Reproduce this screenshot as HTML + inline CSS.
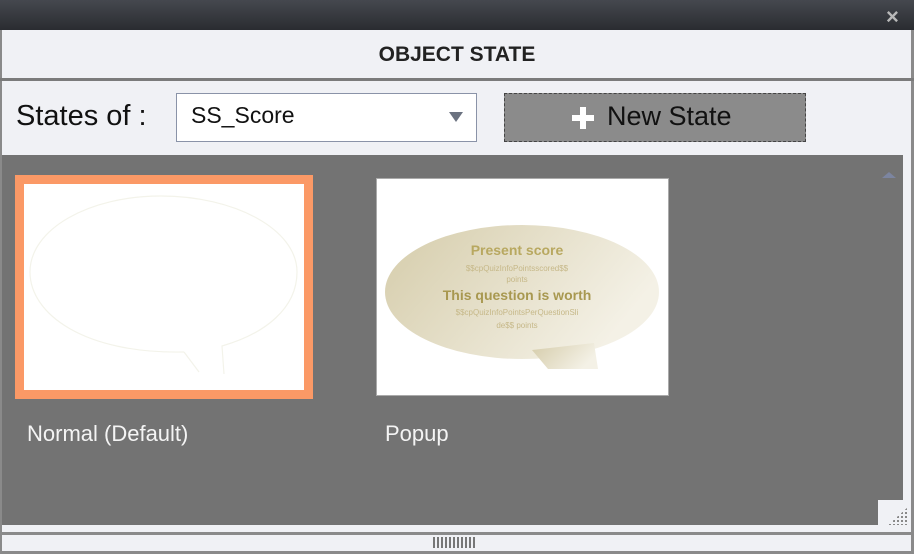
<!DOCTYPE html>
<html><head><style>
*{margin:0;padding:0;box-sizing:border-box}
body{width:914px;height:554px;background:#f0f1f5;position:relative;overflow:hidden;font-family:"Liberation Sans",sans-serif}
.a{position:absolute;white-space:nowrap}
</style></head><body>
<div class="a" style="left:0;top:0;width:914px;height:30px;background:linear-gradient(#45484f,#2a2c31);"></div>
<div class="a" style="left:886px;top:4px;color:#b8b8b8;font-weight:bold;font-size:22px;line-height:26px">×</div>
<div class="a" style="left:0;top:30px;width:2px;height:524px;background:#8a8a8a"></div>
<div class="a" style="left:911px;top:30px;width:3px;height:524px;background:#8a8a8a"></div>
<div class="a" style="left:0;top:42px;width:914px;text-align:center;font-size:21px;line-height:26px;font-weight:bold;color:#222;">OBJECT STATE</div>
<div class="a" style="left:0;top:78px;width:914px;height:3px;background:#7b7b7b"></div>
<div class="a" style="left:16px;top:99px;font-size:29px;line-height:34px;color:#111;">States of :</div>
<div class="a" style="left:176px;top:93px;width:301px;height:49px;background:#fff;border:1px solid #8a93a8"></div>
<div class="a" style="left:191px;top:101px;font-size:23px;line-height:28px;color:#111;">SS_Score</div>
<div class="a" style="left:449px;top:112px;width:0;height:0;border-left:7px solid transparent;border-right:7px solid transparent;border-top:10px solid #6b7280"></div>
<div class="a" style="left:504px;top:93px;width:302px;height:49px;background:#8b8b8b;border:1px dashed #444"></div>
<div class="a" style="left:572px;top:115px;width:22px;height:6px;background:#fff"></div>
<div class="a" style="left:580px;top:107px;width:6px;height:22px;background:#fff"></div>
<div class="a" style="left:607px;top:100px;font-size:27px;line-height:32px;color:#111;">New State</div>
<div class="a" style="left:2px;top:155px;width:901px;height:370px;background:#737373"></div>
<div class="a" style="left:878px;top:500px;width:25px;height:25px;background:#f0f1f5"></div>
<div class="a" style="left:882px;top:172px;width:0;height:0;border-left:7px solid transparent;border-right:7px solid transparent;border-bottom:6px solid #7c85a0"></div>
<div class="a" style="left:15px;top:175px;width:298px;height:224px;border:9px solid #fb9966;background:#fff"></div>
<svg class="a" style="left:24px;top:184px" width="280" height="206"><path d="M160 168 C 60 170 6 130 6 88 C 6 45 65 12 137 12 C 210 12 273 45 273 88 C 273 125 240 150 198 162 L 200 190 M160 168 L 175 188" fill="none" stroke="#f3f3ea" stroke-width="1.2"/></svg>
<div class="a" style="left:27px;top:421px;font-size:22px;line-height:26px;color:#f4f4f4;">Normal (Default)</div>
<div class="a" style="left:376px;top:178px;width:293px;height:218px;background:#fff;border:1px solid #aaa"></div>
<svg class="a" style="left:376px;top:178px" width="293" height="218">
<defs><linearGradient id="g" x1="0" y1="0" x2="1" y2="0.4"><stop offset="0" stop-color="#d5ccaa"/><stop offset="1" stop-color="#f4f1e6"/></linearGradient></defs>
<ellipse cx="146" cy="114" rx="137" ry="67" fill="url(#g)"/>
<path d="M156 172 L172 191 L222 191 L218 165 Z" fill="url(#g)"/>
<text x="141" y="77" font-size="14" font-weight="bold" fill="#b8a860" text-anchor="middle" font-family="Liberation Sans">Present score</text>
<text x="141" y="93" font-size="8" fill="#c6b888" text-anchor="middle" font-family="Liberation Sans">$$cpQuizInfoPointsscored$$</text>
<text x="141" y="104" font-size="8" fill="#c6b888" text-anchor="middle" font-family="Liberation Sans">points</text>
<text x="141" y="122" font-size="14" font-weight="bold" fill="#a89850" text-anchor="middle" font-family="Liberation Sans">This question is worth</text>
<text x="141" y="137" font-size="8" fill="#c6b888" text-anchor="middle" font-family="Liberation Sans">$$cpQuizInfoPointsPerQuestionSli</text>
<text x="141" y="150" font-size="8" fill="#c6b888" text-anchor="middle" font-family="Liberation Sans">de$$ points</text>
</svg>
<div class="a" style="left:385px;top:421px;font-size:22px;line-height:26px;color:#f4f4f4;">Popup</div>
<div class="a" style="left:0;top:532px;width:914px;height:3px;background:#8a8a8a"></div>
<div class="a" style="left:0;top:551px;width:914px;height:3px;background:#8a8a8a"></div>
<div class="a" style="left:433px;top:537px;width:44px;height:11px;background:repeating-linear-gradient(90deg,#777 0 2px,transparent 2px 4px)"></div>
<div class="a" style="left:888px;top:507px;width:20px;height:18px;background:radial-gradient(#888 40%,transparent 45%) 0 0/4px 4px;clip-path:polygon(100% 0,100% 100%,0 100%)"></div>
</body></html>
